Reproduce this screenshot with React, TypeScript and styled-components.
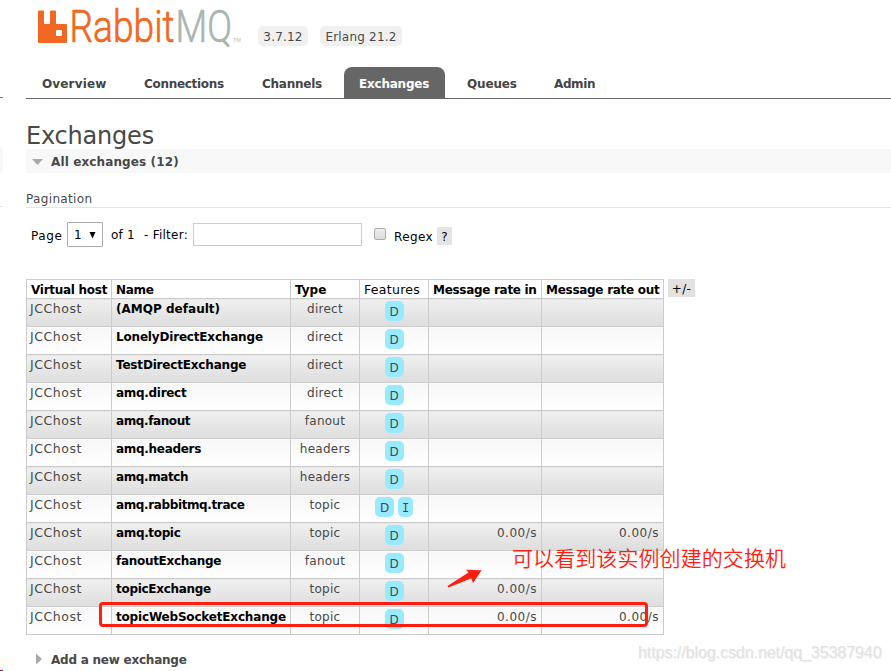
import React from "react";
import styled, { createGlobalStyle } from "styled-components";

const GlobalStyle = createGlobalStyle`
  * { box-sizing: border-box; }
  html, body { margin: 0; padding: 0; overflow: hidden; background: #fff; }
  body {
    font: 12px/16px "DejaVu Sans", Verdana, sans-serif;
    color: #484848;
  }
`;

const Screen = styled.div`
  position: relative;
  display: flex;
  width: 891px;
  height: 671px;
  overflow: hidden;
  background: #fff;
`;

const Sliver = styled.div`
  flex: 0 0 3px;
  margin-right: 23px;
  display: flex;
  flex-direction: column;
`;

const SliverBar = styled.div<{ $top: number; $height: number; $color: string }>`
  flex: none;
  margin-top: ${(p) => p.$top}px;
  height: ${(p) => p.$height}px;
  background: ${(p) => p.$color};
`;

const Main = styled.main`
  flex: 1;
  min-width: 0;
`;

const Header = styled.header`
  display: flex;
  height: 67px;
`;

const Logo = styled.svg`
  display: block;
  width: 220px;
  height: 60px;
  margin-right: 12px;
  flex: none;
`;

const Version = styled.span<{ $width: number }>`
  width: ${(p) => p.$width}px;
  height: 20px;
  margin: 26px 12px 0 0;
  border-radius: 5px;
  background: #f0f0f0;
  letter-spacing: 0.2px;
  line-height: 22px;
  text-align: center;
  white-space: nowrap;
`;

const Tabs = styled.nav`
  display: flex;
  height: 32px;
  padding-left: 1px;
  border-bottom: 1px solid #666;
`;

const Tab = styled.a<{ $width: number; $active?: boolean; $spacing: number }>`
  width: ${(p) => p.$width}px;
  margin-right: ${(p) => (p.$active ? 7 : 0)}px;
  padding-left: 15px;
  border-radius: 8px 8px 0 0;
  background: ${(p) => (p.$active ? "#666" : "transparent")};
  color: ${(p) => (p.$active ? "#fff" : "#444")};
  font-weight: bold;
  line-height: 34px;
  letter-spacing: ${(p) => p.$spacing}px;
  white-space: nowrap;
`;

const Title = styled.h1`
  margin: 22px 0 0;
  height: 28px;
  font-size: 24px;
  line-height: 30px;
  font-weight: normal;
  letter-spacing: -0.2px;
`;

const SectionHeading = styled.h2<{ $shaded?: boolean; $spacing: number }>`
  display: flex;
  align-items: flex-start;
  margin: 0;
  height: 24px;
  padding-left: 6px;
  background: ${(p) => (p.$shaded ? "#f8f8f8" : "transparent")};
  font-size: 12px;
  line-height: 26px;
  letter-spacing: ${(p) => p.$spacing}px;
`;

const Caret = styled.svg`
  width: 12px;
  height: 12px;
  margin: 6px 7px 0 0;
  fill: #a8a8a8;
`;

const Subheading = styled.h3`
  margin: 17px 0 0;
  height: 18px;
  border-bottom: 1px solid #e4e4e4;
  font-size: 12px;
  line-height: 19px;
  font-weight: normal;
  letter-spacing: 0.35px;
`;

const Filters = styled.div`
  display: flex;
  height: 71px;
  padding: 14px 0 0 5px;
  color: #000;
`;

const Label = styled.span<{ $width: number; $top: number; $spacing?: number }>`
  width: ${(p) => p.$width}px;
  margin-top: ${(p) => p.$top}px;
  letter-spacing: ${(p) => p.$spacing ?? 0}px;
  white-space: nowrap;
`;

const PageSelect = styled.div`
  display: flex;
  align-items: center;
  justify-content: space-between;
  width: 36px;
  height: 25px;
  margin-right: 8px;
  padding: 1px 6px 0;
  border: 1px solid #aaa;
  border-radius: 1px;
`;

const FilterInput = styled.input`
  width: 169px;
  height: 23px;
  margin: 1px 12px 0 0;
  padding: 0;
  border: 1px solid #ccc;
  border-radius: 0;
  background: #fff;
`;

const Checkbox = styled.span`
  width: 12px;
  height: 12px;
  margin: 6px 8px 0 0;
  border: 1px solid #acacac;
  border-radius: 2px;
  background: linear-gradient(#ededed, #dcdcdc);
`;

const Help = styled.span`
  width: 15px;
  height: 18px;
  margin-top: 5px;
  background: #e4e4e4;
  line-height: 20px;
  text-align: center;
`;

const TableRow = styled.div`
  display: flex;
  height: 368px;
`;

const Table = styled.table`
  width: 638px;
  height: 356px;
  margin-right: 4px;
  border-collapse: collapse;
  table-layout: fixed;
`;

const HeadCell = styled.th<{ $plain?: boolean; $spacing?: number }>`
  height: 19px;
  padding: 1px 0 0 4px;
  border: 1px solid #ccc;
  color: #000;
  font-size: ${(p) => (p.$plain ? 12.5 : 12)}px;
  font-weight: ${(p) => (p.$plain ? "normal" : "bold")};
  letter-spacing: ${(p) => p.$spacing ?? 0}px;
  line-height: 16px;
  text-align: left;
  white-space: nowrap;
`;

const BodyRow = styled.tr<{ $dark: boolean }>`
  height: 28px;

  td {
    background: ${(p) =>
      p.$dark ? "linear-gradient(#f0f0f0, #dddddd)" : "linear-gradient(#f7f7f7, #ffffff)"};
  }
`;

const Cell = styled.td<{ $align?: string; $name?: boolean; $spacing?: number }>`
  height: 28px;
  padding: 2px 4px 0;
  border: 1px solid #ccc;
  color: ${(p) => (p.$name ? "#000" : "#484848")};
  font-weight: ${(p) => (p.$name ? "bold" : "normal")};
  letter-spacing: ${(p) => p.$spacing ?? 0}px;
  line-height: 16px;
  text-align: ${(p) => p.$align ?? "left"};
  vertical-align: top;
  white-space: nowrap;
`;

const HostCell = styled(Cell)`
  padding-left: 3px;
  font-size: 12.5px;
`;

const Features = styled.div`
  display: flex;
  justify-content: center;
  gap: 4px;
`;

const Feature = styled.span<{ $width: number }>`
  width: ${(p) => p.$width}px;
  height: 20px;
  border-radius: 5px;
  background: #98ebff;
  line-height: 22px;
  text-align: center;
`;

const SerifFeature = styled(Feature)`
  font-family: "DejaVu Sans Mono", monospace;
`;

const ColumnToggle = styled.span`
  width: 27px;
  height: 18px;
  background: #e2e2e2;
  color: #000;
  letter-spacing: 0.3px;
  line-height: 20px;
  text-align: center;
`;

const Highlight = styled.div`
  position: absolute;
  left: 99px;
  top: 602px;
  width: 549px;
  height: 25px;
  border: 3px solid #ff1e10;
  border-radius: 4px;
`;

const Arrow = styled.svg`
  position: absolute;
  left: 445px;
  top: 566px;
  width: 40px;
  height: 24px;
`;

const Note = styled.div`
  position: absolute;
  left: 512px;
  top: 542px;
  color: #ff1e10;
  font: 350 21px/30px "Noto Sans CJK SC", sans-serif;
  letter-spacing: 0.08px;
  white-space: nowrap;
`;

const Watermark = styled.div`
  position: absolute;
  left: 638px;
  top: 643px;
  color: #e2e2e2;
  font: 16px/20px "Liberation Sans", Arial, sans-serif;
  letter-spacing: -0.06px;
  text-shadow: 1px 1px 0 #f2f2f2;
  white-space: nowrap;
`;

const tabs = [
  { label: "Overview", width: 102, spacing: 0.15 },
  { label: "Connections", width: 118, spacing: -0.3 },
  { label: "Channels", width: 97, spacing: -0.25 },
  { label: "Exchanges", width: 101, spacing: -0.22, active: true },
  { label: "Queues", width: 87, spacing: -0.15 },
  { label: "Admin", width: 80, spacing: -0.4 },
];

const columnWidths = [85, 179, 69, 69, 113, 122];

type Exchange = {
  name: string;
  type: string;
  spacing?: number;
  internal?: boolean;
  rateIn?: string;
  rateOut?: string;
};

const exchanges: Exchange[] = [
  { name: "(AMQP default)", type: "direct", spacing: 0.02 },
  { name: "LonelyDirectExchange", type: "direct", spacing: -0.18 },
  { name: "TestDirectExchange", type: "direct", spacing: -0.18 },
  { name: "amq.direct", type: "direct", spacing: -0.3 },
  { name: "amq.fanout", type: "fanout", spacing: -0.4 },
  { name: "amq.headers", type: "headers", spacing: -0.3 },
  { name: "amq.match", type: "headers", spacing: -0.4 },
  { name: "amq.rabbitmq.trace", type: "topic", spacing: -0.38, internal: true },
  { name: "amq.topic", type: "topic", spacing: -0.35, rateIn: "0.00/s", rateOut: "0.00/s" },
  { name: "fanoutExchange", type: "fanout", spacing: -0.3 },
  { name: "topicExchange", type: "topic", spacing: -0.3, rateIn: "0.00/s" },
  {
    name: "topicWebSocketExchange",
    type: "topic",
    spacing: -0.18,
    rateIn: "0.00/s",
    rateOut: "0.00/s",
  },
];

function RabbitLogo() {
  return (
    <Logo viewBox="26 0 220 60">
      <path
        fill="#f26822"
        d="M39 10.500h4q1 0 1 1V23q0 1 1 1h4q1 0 1-1V11.500q0-1 1-1h4q1 0 1 1V23q0 1 1 1h9q1 0 1 1v17q0 1-1 1H39q-1 0-1-1V11.500q0-1 1-1ZM57 30q-1 0-1 1v4q0 1 1 1h4q1 0 1-1v-4q0-1-1-1Z"
        fillRule="evenodd"
      />
      <g fontFamily="Roboto, sans-serif" fontWeight="300" fontSize="43.500">
        <text x="69.500" y="42" fill="#f26822" stroke="#f26822" strokeWidth="0.7" textLength="105" lengthAdjust="spacingAndGlyphs">
          Rabbit
        </text>
        <text x="175.500" y="42" fill="#a9b5af" stroke="#a9b5af" strokeWidth="0.6" textLength="56.500" lengthAdjust="spacingAndGlyphs">
          MQ
        </text>
      </g>
      <text x="233" y="41.500" fill="#b8c1bc" fontFamily="Liberation Sans, sans-serif" fontSize="5.500">
        TM
      </text>
    </Logo>
  );
}

export default function App() {
  return (
    <>
      <GlobalStyle />
      <Screen>
        <Sliver>
          <SliverBar $top={97} $height={1} $color="#777" />
          <SliverBar $top={50} $height={24} $color="#f8f8f8" />
          <SliverBar $top={34} $height={1} $color="#e4e4e4" />
          <SliverBar
            $top={463}
            $height={1}
            $color="linear-gradient(90deg, #e00 33%, #0b0 33% 66%, #00d 66%)"
          />
        </Sliver>
        <Main>
          <Header>
            <RabbitLogo />
            <Version $width={50}>3.7.12</Version>
            <Version $width={82}>Erlang 21.2</Version>
          </Header>
          <Tabs>
            {tabs.map((t) => (
              <Tab key={t.label} $width={t.width} $active={t.active} $spacing={t.spacing}>
                {t.label}
              </Tab>
            ))}
          </Tabs>
          <Title>Exchanges</Title>
          <SectionHeading $shaded $spacing={0.12}>
            <Caret viewBox="0 0 12 12">
              <path d="M0 4h11L5.500 10Z" />
            </Caret>
            All exchanges (12)
          </SectionHeading>
          <Subheading>Pagination</Subheading>
          <Filters>
            <Label $width={36} $top={6} $spacing={0.6}>Page</Label>
            <PageSelect>
              <span>1</span>
              <svg width="7" height="7" viewBox="0 0 7 7">
                <path d="M0.500 0h6L3.500 6.500Z" />
              </svg>
            </PageSelect>
            <Label $width={33} $top={5} $spacing={0.2}>of 1</Label>
            <Label $width={49} $top={5} $spacing={0.25}>- Filter:</Label>
            <FilterInput />
            <Checkbox />
            <Label $width={43} $top={7} $spacing={0.4}>Regex</Label>
            <Help>?</Help>
          </Filters>
          <TableRow>
            <Table>
              <colgroup>
                {columnWidths.map((w, i) => (
                  <col key={i} width={w} />
                ))}
              </colgroup>
              <thead>
                <tr>
                  <HeadCell $spacing={-0.28}>Virtual host</HeadCell>
                  <HeadCell $spacing={-0.3}>Name</HeadCell>
                  <HeadCell>Type</HeadCell>
                  <HeadCell $plain $spacing={0.3}>Features</HeadCell>
                  <HeadCell $spacing={-0.3}>Message rate in</HeadCell>
                  <HeadCell $spacing={-0.28}>Message rate out</HeadCell>
                </tr>
              </thead>
              <tbody>
                {exchanges.map((e, i) => (
                  <BodyRow key={e.name} $dark={i % 2 === 0}>
                    <HostCell $spacing={0.55}>JCChost</HostCell>
                    <Cell $name $spacing={e.spacing}>{e.name}</Cell>
                    <Cell $align="center" $spacing={0.25}>{e.type}</Cell>
                    <Cell>
                      <Features>
                        <Feature $width={19}>D</Feature>
                        {e.internal && <SerifFeature $width={15}>I</SerifFeature>}
                      </Features>
                    </Cell>
                    <Cell $align="right" $spacing={0.5}>{e.rateIn}</Cell>
                    <Cell $align="right" $spacing={0.5}>{e.rateOut}</Cell>
                  </BodyRow>
                ))}
              </tbody>
            </Table>
            <ColumnToggle>+/-</ColumnToggle>
          </TableRow>
          <SectionHeading $spacing={-0.23}>
            <Caret viewBox="0 0 12 12">
              <path d="M4 0.500v11L10 6Z" />
            </Caret>
            Add a new exchange
          </SectionHeading>
        </Main>
        <Highlight />
        <Arrow viewBox="445 566 40 24">
          <path
            fill="#ff1e10"
            d="M447.500 586 468.500 572.500 466 569.700 481.700 570.300 473 583 471.300 578.300 448.500 587.500Z"
          />
        </Arrow>
        <Note>可以看到该实例创建的交换机</Note>
        <Watermark>https://blog.csdn.net/qq_35387940</Watermark>
      </Screen>
    </>
  );
}
